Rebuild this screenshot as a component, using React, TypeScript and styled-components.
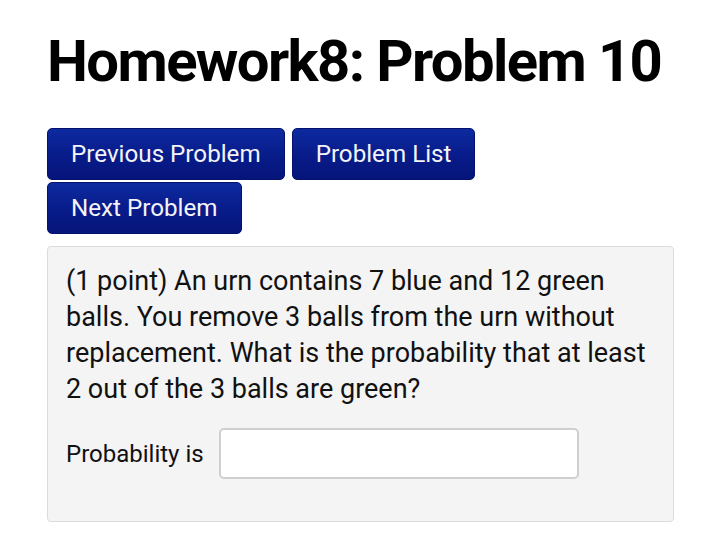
import styled, { createGlobalStyle } from 'styled-components';

const GlobalStyle = createGlobalStyle`
  html, body {
    margin: 0;
    padding: 0;
    background: #ffffff;
  }
  body {
    font-family: Roboto, "Liberation Sans", Arial, sans-serif;
    color: #111;
  }
`;

const Page = styled.div`
  padding: 27px 47px 0 47px;
  width: 720px;
  box-sizing: border-box;
`;

const Title = styled.h1`
  margin: 0;
  font-size: 58px;
  font-weight: 700;
  line-height: 68px;
  color: #000;
  letter-spacing: -1.6px;
  white-space: nowrap;
`;

const NavBar = styled.div`
  display: flex;
  flex-wrap: wrap;
  width: 440px;
  column-gap: 7px;
  row-gap: 2px;
  margin-top: 33px;
`;

const NavButton = styled.button`
  height: 52px;
  padding: 0 23px;
  border: 1px solid #061269;
  border-radius: 5px;
  background: linear-gradient(#0d2aa0, #071a87 60%, #06157a);
  color: #f4f4f8;
  font-family: Roboto, "Liberation Sans", Arial, sans-serif;
  font-size: 24.2px;
  cursor: pointer;
`;

const ProblemBox = styled.div`
  margin-top: 12px;
  width: 627px;
  box-sizing: border-box;
  background: #f4f4f4;
  border: 1px solid #dcdcdc;
  border-radius: 4px;
  padding: 16px 18px 42px 18px;
`;

const Question = styled.p`
  margin: 0;
  font-size: 27px;
  line-height: 36px;
  color: #111;
`;

const AnswerRow = styled.div`
  display: flex;
  align-items: center;
  gap: 15px;
  margin-top: 21px;
`;

const Label = styled.span`
  font-size: 24px;
  color: #111;
`;

const AnswerInput = styled.input`
  width: 360px;
  height: 51px;
  box-sizing: border-box;
  border: 2px solid #cfcfcf;
  border-radius: 5px;
  background: #fff;
  font-size: 20px;
  padding: 0 10px;
`;

export default function App() {
  return (
    <>
      <GlobalStyle />
      <Page>
        <Title>Homework8: Problem 10</Title>
        <NavBar>
          <NavButton>Previous Problem</NavButton>
          <NavButton>Problem List</NavButton>
          <NavButton>Next Problem</NavButton>
        </NavBar>
        <ProblemBox>
          <Question>
            (1 point) An urn contains 7 blue and 12 green balls. You remove 3 balls from the urn
            without replacement. What is the probability that at least 2 out of the 3 balls are
            green?
          </Question>
          <AnswerRow>
            <Label>Probability is</Label>
            <AnswerInput type="text" />
          </AnswerRow>
        </ProblemBox>
      </Page>
    </>
  );
}
